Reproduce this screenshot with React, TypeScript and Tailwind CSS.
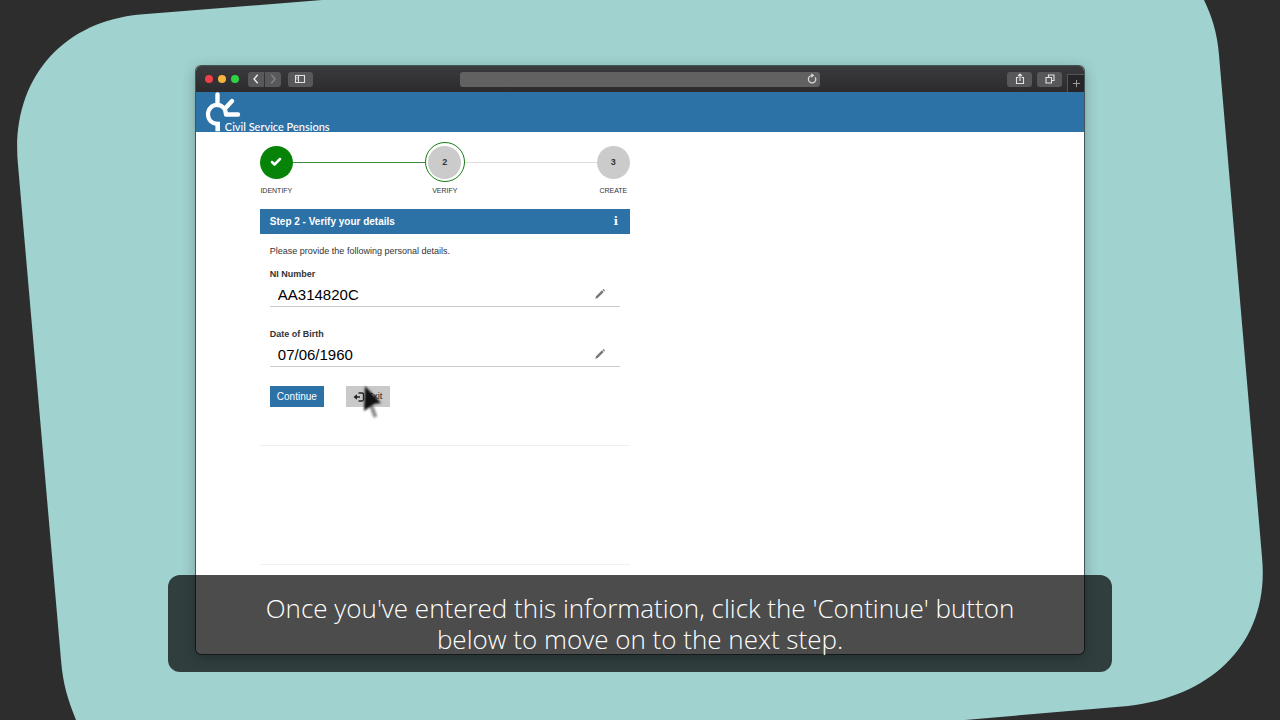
import { Check, Plus } from "lucide-react";
import { useState } from "react";

function Backdrop() {
  return (
    <svg
      className="absolute inset-0 size-full"
      viewBox="0 0 1280 720"
      preserveAspectRatio="none"
      aria-hidden="true"
    >
      <path
        fill="#a0d2cf"
        d="M140 14.500L322 0H1204C1212 17 1217 32 1219 55L1262 557C1270 640 1215 696 1128 706L965 720H76C68 700 63 685 61 660L18 165C10 82 60 22 140 14.500Z"
      />
    </svg>
  );
}

function ShareIcon() {
  return (
    <svg viewBox="0 0 12 12" className="size-3" fill="none" stroke="#e2e2e2" strokeWidth="1.100">
      <path d="M4.500 4.500H2.500V10.500H9.500V4.500H7.500M6 8V1.200M4 3L6 1L8 3" />
    </svg>
  );
}

function TabsIcon() {
  return (
    <svg viewBox="0 0 12 12" className="size-3" fill="none" stroke="#e2e2e2" strokeWidth="1.100">
      <path d="M2 4.500H7.500V10H2ZM4.500 4.500V2H10V7.500H7.500" />
    </svg>
  );
}

function SidebarIcon() {
  return (
    <svg viewBox="0 0 12 12" className="size-3" fill="none" stroke="#e2e2e2" strokeWidth="1.100">
      <path d="M1.500 2.500H10.500V9.500H1.500ZM4.500 2.500V9.500M2.500 4.500H3.500M2.500 6H3.500" />
    </svg>
  );
}

function Chevron({ d, stroke }: { d: string; stroke: string }) {
  return (
    <svg viewBox="0 0 12 12" className="size-3" fill="none" stroke={stroke} strokeWidth="1.400">
      <path d={d} />
    </svg>
  );
}

function ReloadIcon() {
  return (
    <svg viewBox="0 0 12 12" className="size-3" fill="none" stroke="#dcdcdc" strokeWidth="1.200">
      <path d="M9.200 4.200A3.700 3.700 0 1 1 6 2.500" />
      <path d="M5.300 0.300L8.300 2.500L5.300 4.700Z" fill="#dcdcdc" stroke="none" />
    </svg>
  );
}

function Toolbar() {
  const key = "flex h-[15px] items-center justify-center rounded-[3px] bg-[#58585a]";
  return (
    <div className="grid h-[26px] grid-cols-[1fr_40.500%_1fr] items-center bg-linear-to-b from-[#3a3a3c] to-[#2c2c2e]">
      <div className="flex items-center pl-[9px]">
        <span className="flex gap-[5px]">
          <i className="size-2 rounded-full bg-[#ee4049]" />
          <i className="size-2 rounded-full bg-[#f4b43e]" />
          <i className="size-2 rounded-full bg-[#2fd446]" />
        </span>
        <span className="ml-[9px] flex gap-px">
          <button type="button" aria-label="Back" className={key + " w-4 rounded-r-none"}>
            <Chevron d="M7.700 1.800L4 6L7.700 10.200" stroke="#ededed" />
          </button>
          <button type="button" aria-label="Forward" className={key + " w-4 rounded-l-none"}>
            <Chevron d="M4.300 1.800L8 6L4.300 10.200" stroke="#858587" />
          </button>
        </span>
        <button type="button" aria-label="Sidebar" className={key + " ml-[7px] w-[25px]"}>
          <SidebarIcon />
        </button>
      </div>
      <div className="flex h-[15px] items-center rounded-[3px] bg-[#616162] pr-0.5">
        <input aria-label="Address" className="h-full min-w-0 flex-1 bg-transparent outline-none" />
        <button type="button" aria-label="Reload">
          <ReloadIcon />
        </button>
      </div>
      <div className="flex h-full items-center justify-end gap-[5px]">
        <button type="button" aria-label="Share" className={key + " w-[25px]"}>
          <ShareIcon />
        </button>
        <button type="button" aria-label="Show tabs" className={key + " w-[25px]"}>
          <TabsIcon />
        </button>
        <button
          type="button"
          aria-label="New tab"
          className="flex h-[18px] w-[17px] items-center justify-center self-end border-t border-l border-[#555557] bg-[#262628] text-[#a5a5a5]"
        >
          <Plus size={11} strokeWidth={2} />
        </button>
      </div>
    </div>
  );
}

function Brand() {
  return (
    <header className="flex h-10 items-end bg-[#2d72a7] pl-[9px]">
      <svg viewBox="0 0 36 40" className="h-10 w-9" fill="none" stroke="#fff" aria-hidden="true">
        <path d="M21 22.500A9 9.500 0 1 0 12.700 31.800" strokeWidth="4.200" />
        <path d="M12.500 2.500V13M20 16.500L27 9M21 22.500H33" strokeWidth="4.400" strokeLinecap="round" />
        <path d="M12.700 29.700V39.200" strokeWidth="4.600" />
      </svg>
      <span className="-ml-4 font-['Lato'] text-[11px] leading-[11px] font-medium text-white">
        Civil Service Pensions
      </span>
    </header>
  );
}

function Steps() {
  const dot = "flex size-[33px] items-center justify-center rounded-full text-[9px] font-bold";
  return (
    <ol className="relative flex justify-between pt-2.5 text-[7px] leading-3 text-[#333]">
      <li className="absolute inset-x-4 top-[30px] flex" aria-hidden="true">
        <span className="h-px flex-1 bg-[#3f8f3f]" />
        <span className="h-px flex-1 bg-[#dedede]" />
      </li>
      <li className="relative flex w-[33px] flex-col items-center gap-[3px]">
        <span className="flex h-10 items-center">
          <span className={dot + " bg-[#078407] text-white"}>
            <Check size={12} strokeWidth={5} />
          </span>
        </span>
        IDENTIFY
      </li>
      <li className="relative flex w-10 flex-col items-center gap-[3px]">
        <span className="flex size-10 items-center justify-center rounded-full border border-[#137d13] bg-white">
          <span className={dot + " bg-[#cbcbcb]"}>2</span>
        </span>
        VERIFY
      </li>
      <li className="relative flex w-[33px] flex-col items-center gap-[3px]">
        <span className="flex h-10 items-center">
          <span className={dot + " bg-[#cbcbcb]"}>3</span>
        </span>
        CREATE
      </li>
    </ol>
  );
}

function Field({ id, label, initial }: { id: string; label: string; initial: string }) {
  const [value, setValue] = useState(initial);
  return (
    <div className="pb-[19px]">
      <label htmlFor={id} className="block text-[9px] leading-4 font-bold text-[#333]">
        {label}
      </label>
      <div className="flex h-[25px] items-center border-b border-[#ccc] pr-3.5">
        <input
          id={id}
          value={value}
          onChange={(event) => setValue(event.target.value)}
          className="h-full min-w-0 flex-1 bg-transparent px-2 text-[15px] text-black outline-none"
        />
        <svg viewBox="0 0 12 12" className="size-3" fill="#777" aria-hidden="true">
          <path d="M1.200 10.800L2 8.300L8 2.300L9.700 4L3.700 10ZM8.600 1.700L9.400 0.900L11.100 2.600L10.300 3.400Z" />
        </svg>
      </div>
    </div>
  );
}

function ExitIcon() {
  return (
    <svg viewBox="0 0 12 12" className="size-3" fill="none" stroke="#222" strokeWidth="1.300">
      <path d="M5.500 2H9A1.500 1.500 0 0 1 10.500 3.500V8.500A1.500 1.500 0 0 1 9 10H5.500M7 6H3" />
      <path d="M0.500 6L4 3.300V8.700Z" fill="#222" stroke="none" />
    </svg>
  );
}

function Pointer() {
  return (
    <svg
      viewBox="0 0 24 36"
      className="absolute top-0 left-4 h-9 w-6 blur-[1px]"
      aria-hidden="true"
    >
      <path d="M9 19L13.500 31" stroke="#8e8e8e" strokeWidth="4" />
      <path d="M3 0L19 17L12 18L2 25Z" fill="#111" />
    </svg>
  );
}

function VerifyForm() {
  return (
    <main className="ml-16 w-[370px] max-w-[80%]">
      <Steps />
      <h1 className="mt-3 flex h-[25px] items-center justify-between bg-[#2d72a7] px-2.5 text-[10px] font-bold text-white">
        Step 2 - Verify your details
        <span className="mr-0.5 font-['DejaVu_Serif'] text-[11px] leading-3">i</span>
      </h1>
      <form className="border-b border-[#efefef] px-2.5 pt-2.5 pb-[38px]" onSubmit={(e) => e.preventDefault()}>
        <p className="mb-2 text-[9px] leading-[14px] text-[#333]">
          Please provide the following personal details.
        </p>
        <Field id="ni-number" label="NI Number" initial="AA314820C" />
        <Field id="birth-date" label="Date of Birth" initial="07/06/1960" />
        <div className="flex gap-[22px] text-[10px]">
          <button type="submit" className="h-[21px] w-[54px] bg-[#2d72a7] text-white">
            Continue
          </button>
          <div className="relative">
            <button
              type="button"
              className="flex h-[21px] w-11 items-center justify-center gap-0.5 bg-[#c9c9c9] text-[9px] text-[#222]"
            >
              <ExitIcon />
              Exit
            </button>
            <Pointer />
          </div>
        </div>
      </form>
      <hr className="mt-[118px] border-[#f0f0f0]" />
    </main>
  );
}

export default function App() {
  return (
    <div className="relative min-h-screen overflow-hidden bg-[#2d2d2d] px-[15.300%] pt-[66px] font-['Liberation_Sans',sans-serif]">
      <Backdrop />
      <div className="relative min-h-[588px] overflow-hidden rounded-[5px] bg-white shadow-[0_0_0_1px_#42545a,0_3px_14px_rgba(0,0,0,0.300)]">
        <Toolbar />
        <Brand />
        <VerifyForm />
      </div>
      <div className="absolute inset-x-[13.100%] bottom-12 rounded-xl bg-black/70 px-12 pt-[18px] pb-[17px] text-center font-['Open_Sans','Noto_Sans',sans-serif] text-[26px] leading-[31px] font-light text-white">
        <p>
          Once you've entered this information, click the 'Continue' button
          <br />
          below to move on to the next step.
        </p>
      </div>
    </div>
  );
}
